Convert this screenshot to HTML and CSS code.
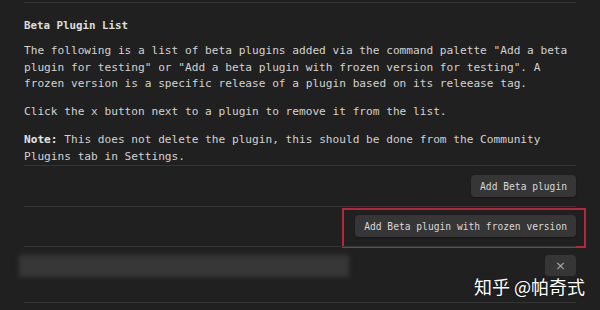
FILE: index.html
```html
<!DOCTYPE html>
<html>
<head>
<meta charset="utf-8">
<link rel="stylesheet" href="styles.css">
</head>
<body>
<div class="pane">
  <div class="prev-item"></div>
  <div class="heading">
    <div class="title">Beta Plugin List</div>
    <p class="desc">The following is a list of beta plugins added via the command palette "Add a beta plugin for testing" or "Add a beta plugin with frozen version for testing". A frozen version is a specific release of a plugin based on its releease tag.</p>
    <p class="desc">Click the x button next to a plugin to remove it from the list.</p>
    <p class="desc last"><b>Note:</b> This does not delete the plugin, this should be done from the Community Plugins tab in Settings.</p>
  </div>
  <div class="row row-a">
    <button class="btn">Add Beta plugin</button>
  </div>
  <div class="row row-b">
    <button class="btn">Add Beta plugin with frozen version</button>
    <div class="highlight"></div>
  </div>
  <div class="row row-c">
    <div class="blurred"></div>
    <button class="btn-x">×</button>
  </div>
  <div class="watermark">知乎 @帕奇式</div>
</div>
</body>
</html>
```

FILE: styles.css
```css
html, body {
  margin: 0;
  padding: 0;
  background: #202020;
  width: 600px;
  height: 310px;
  overflow: hidden;
}
.pane {
  position: relative;
  width: 552px;
  margin-left: 24px;
  height: 310px;
  font-family: "DejaVu Sans Mono", "Liberation Mono", monospace;
  color: #d2d2d2;
}
.prev-item {
  height: 2px;
  border-bottom: 1px solid #343434;
}
.heading {
  padding-top: 15px;
}
.title {
  font-size: 10.8px;
  font-weight: bold;
  line-height: 16px;
  color: #dedede;
  margin-bottom: 9px;
}
.desc {
  font-size: 11.15px;
  line-height: 16.5px;
  margin: 0 0 11.5px 0;
}
.desc.last {
  margin-bottom: 0;
}
.desc b {
  color: #e4e4e4;
}
.row {
  position: relative;
  display: flex;
  align-items: center;
  justify-content: flex-end;
  border-top: 1px solid #343434;
}
.row-a {
  padding: 9px 0 9px 0;
}
.row-b {
  padding: 8px 0 9px 0;
}
.row-c {
  justify-content: space-between;
  align-items: flex-start;
  padding: 8px 0 25px 0;
  border-bottom: 1px solid #343434;
}
.btn {
  height: 22px;
  padding: 0 9px;
  border: none;
  border-radius: 4px;
  background: #363636;
  color: #d8d8d8;
  font-family: "DejaVu Sans Mono", "Liberation Mono", monospace;
  font-size: 9.65px;
  box-shadow: 0 1px 2px rgba(0,0,0,0.35);
}
.highlight {
  position: absolute;
  left: 318px;
  top: 1px;
  width: 240px;
  height: 36px;
  border: 2px solid #b8253a;
}
.blurred {
  margin-left: -5px;
  width: 330px;
  height: 22px;
  background: #373737;
  filter: blur(2.5px);
}
.btn-x {
  width: 31px;
  height: 21px;
  padding: 0;
  border: none;
  border-radius: 4px;
  background: #363636;
  color: #a8a8a8;
  font-family: "DejaVu Sans", sans-serif;
  font-size: 13px;
  line-height: 21px;
}
.watermark {
  position: absolute;
  left: 450px;
  top: 274px;
  font-family: "Noto Sans CJK SC", sans-serif;
  font-size: 18px;
  line-height: 24px;
  color: #ffffff;
  white-space: nowrap;
  text-shadow: 0 0 2px rgba(0,0,0,0.6);
}
```
